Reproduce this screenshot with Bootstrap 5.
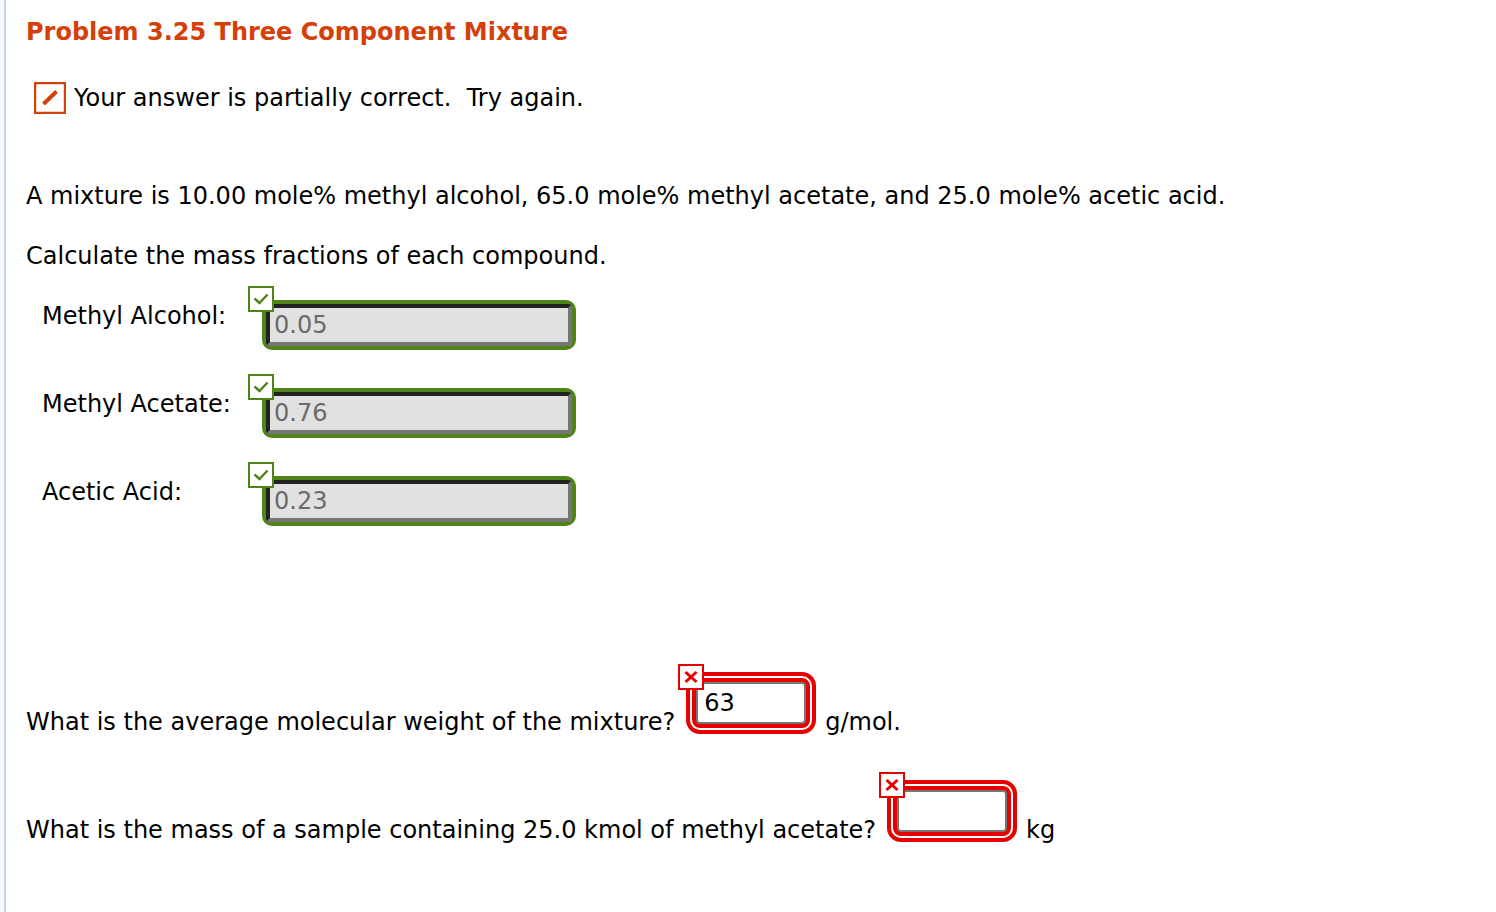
<!DOCTYPE html>
<html lang="en">
<head>
<meta charset="utf-8">
<meta name="viewport" content="width=device-width, initial-scale=1">
<title>Problem 3.25 Three Component Mixture</title>
<link href="https://cdn.jsdelivr.net/npm/bootstrap@5.3.0/dist/css/bootstrap.min.css" rel="stylesheet">
<style>
  body { font: 24px/32px Verdana, "DejaVu Sans", sans-serif; color: #000; background: #f5f9fc; }
  .problem { margin-left: 4px; border-left: 2px solid #cbd5e2; padding: 16px 20px; }
  .problem-title { font-size: 24px; line-height: 32px; font-weight: 700; color: #d43f0a; margin-bottom: 34px; }
  .feedback { padding-left: 8px; margin-bottom: 66px; }
  .statement { margin-bottom: 28px; }
  .answers { padding-left: 16px; margin-bottom: 122px; }
  .answer-row { height: 60px; margin-bottom: 28px; }
  .answer-label { width: 206px; margin-right: 14px; }
  .marked { position: relative; flex-shrink: 0; }
  .status-ok { position: absolute; left: -18px; top: -18px; }
  .status-wrong { position: absolute; left: -12px; top: -12px; }
  .answer-ok { border: 4px solid #4f8419; border-radius: 10px; background: #4f8419; height: 50px; width: 314px; }
  .answer-ok input { display: block; width: 100%; height: 42px; border: 4px solid; border-color: #222 #767676 #767676 #222; border-radius: 4px; background: #e1e1e1; color: #6a6a6a; padding: 0 4px; }
  .answer-bad { border: 4px solid #e60000; border-radius: 14px; padding: 2px; background: #fff; margin: 0 9px 4px 11px; }
  .ring { display: block; border: 4px solid #e60000; border-radius: 8px; background: #e60000; }
  .answer-bad input { display: block; width: 110px; height: 42px; border: 2px solid #767676; border-radius: 4px; padding: 0 6px; background: #fff; color: #000; }
  .question { height: 80px; margin-bottom: 28px; }
</style>
</head>
<body>
<main class="problem bg-white min-vh-100">
  <h1 class="problem-title">Problem 3.25 Three Component Mixture</h1>
  <div class="feedback d-flex align-items-center gap-2">
    <svg width="32" height="32" viewBox="0 0 32 32" aria-hidden="true"><path fill="#fff" stroke="#d43f0a" stroke-width="2.4" d="M1 1h30v30H1z"/><path stroke="#d43f0a" stroke-width="4" d="M9.500 22 22.500 9.500"/></svg>
    <span>Your answer is partially correct.&nbsp; Try again.</span>
  </div>
  <p class="statement">A mixture is 10.00 mole% methyl alcohol, 65.0 mole% methyl acetate, and 25.0 mole% acetic acid.</p>
  <p class="statement">Calculate the mass fractions of each compound.</p>
  <div class="answers">
    <div class="answer-row d-flex">
      <label class="answer-label" for="alcohol">Methyl Alcohol:</label>
      <span class="marked answer-ok"><input id="alcohol" type="text" value="0.05" disabled>
        <svg class="status-ok" width="26" height="26" viewBox="0 0 26 26"><path fill="#fff" stroke="#4f8419" stroke-width="2" d="M1 1h24v24H1z"/><path fill="none" stroke="#4f8419" stroke-width="2.400" d="m6.500 12.500 5 4.500L19.500 8.500"/></svg></span>
    </div>
    <div class="answer-row d-flex">
      <label class="answer-label" for="acetate">Methyl Acetate:</label>
      <span class="marked answer-ok"><input id="acetate" type="text" value="0.76" disabled>
        <svg class="status-ok" width="26" height="26" viewBox="0 0 26 26"><path fill="#fff" stroke="#4f8419" stroke-width="2" d="M1 1h24v24H1z"/><path fill="none" stroke="#4f8419" stroke-width="2.400" d="m6.500 12.500 5 4.500L19.500 8.500"/></svg></span>
    </div>
    <div class="answer-row d-flex mb-0">
      <label class="answer-label" for="acid">Acetic Acid:</label>
      <span class="marked answer-ok"><input id="acid" type="text" value="0.23" disabled>
        <svg class="status-ok" width="26" height="26" viewBox="0 0 26 26"><path fill="#fff" stroke="#4f8419" stroke-width="2" d="M1 1h24v24H1z"/><path fill="none" stroke="#4f8419" stroke-width="2.400" d="m6.500 12.500 5 4.500L19.500 8.500"/></svg></span>
    </div>
  </div>
  <div class="question d-flex align-items-end">
    <label for="weight">What is the average molecular weight of the mixture?</label>
    <span class="marked answer-bad"><span class="ring"><input id="weight" type="text" value="63"></span>
      <svg class="status-wrong" width="26" height="26" viewBox="0 0 26 26"><path fill="#fff" stroke="#e60000" stroke-width="2" d="M1 1h24v24H1z"/><path stroke="#e60000" stroke-width="3" d="m7.500 8 11 10m0-10-11 10"/></svg></span>
    <span>g/mol.</span>
  </div>
  <div class="question d-flex align-items-end mb-0">
    <label for="mass">What is the mass of a sample containing 25.0 kmol of methyl acetate?</label>
    <span class="marked answer-bad"><span class="ring"><input id="mass" type="text" value=""></span>
      <svg class="status-wrong" width="26" height="26" viewBox="0 0 26 26"><path fill="#fff" stroke="#e60000" stroke-width="2" d="M1 1h24v24H1z"/><path stroke="#e60000" stroke-width="3" d="m7.500 8 11 10m0-10-11 10"/></svg></span>
    <span>kg</span>
  </div>
</main>
<script src="https://cdn.jsdelivr.net/npm/bootstrap@5.3.0/dist/js/bootstrap.bundle.min.js"></script>
</body>
</html>
